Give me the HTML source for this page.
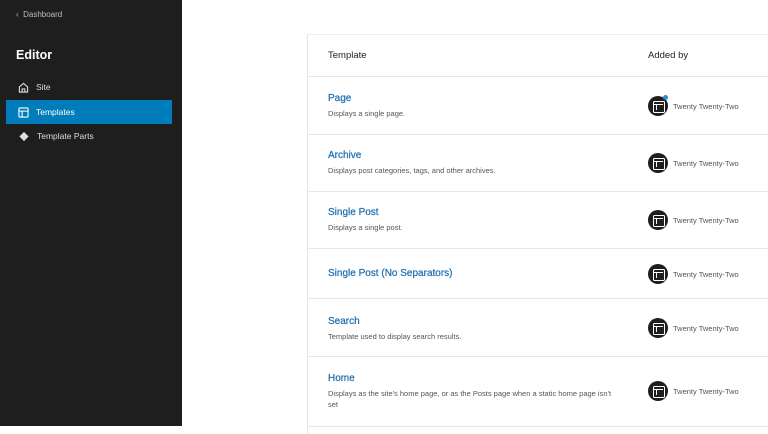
<!DOCTYPE html><html><head><style>
*{margin:0;padding:0;box-sizing:border-box}
body{width:768px;height:426px;overflow:hidden;background:#fff;font-family:"Liberation Sans",sans-serif;position:relative}
.sb{position:absolute;left:0;top:0;width:182px;height:426px;background:#1e1e1e;color:#ccc}
.dash{position:absolute;left:16px;top:10px;font-size:8px;color:#bbb}
.ed{position:absolute;left:16px;top:48px;font-size:12.5px;font-weight:bold;color:#fff}
.it{position:absolute;left:6px;width:166px;height:24px;font-size:8.5px;color:#ddd;display:flex;align-items:center;padding-left:12px}
.it svg{margin-right:7px}
.sel{background:#007cba;color:#fff}
.card{position:absolute;left:307px;top:34px;width:470px;height:400px;background:#fff;border-left:1px solid #e6e6e6;border-top:1px solid #eee}
.row{position:absolute;left:0;width:470px;border-bottom:1px solid #e8e8e8}
.t{position:absolute;left:20px;font-size:10px;color:#2271b1;-webkit-text-stroke:0.25px #2271b1}
.d{position:absolute;left:20px;font-size:7.5px;color:#555;line-height:11px;width:295px}
.av{position:absolute;left:340px;width:20px;height:20px;border-radius:50%;background:#1e1e1e}
.av:after{content:"";position:absolute;left:5px;top:5px;width:10px;height:10px;border:1.3px solid #fff;border-radius:1.5px}
.av i{position:absolute;left:5px;top:8px;width:10px;height:1.3px;background:#fff}
.av b{position:absolute;left:8px;top:8px;width:1.3px;height:6px;background:#fff}
.an{position:absolute;left:365px;font-size:7.5px;color:#555}
.h{font-size:9.5px;color:#1e1e1e;position:absolute;top:15px}
</style></head><body>
<div class="sb">
<div class="dash">‹&nbsp; Dashboard</div>
<div class="ed">Editor</div>
<div class="it" style="top:75px"><svg width="11" height="11" viewBox="0 0 12 12"><path d="M1.5 5.5L6 1.5l4.5 4V11h-9z M4.5 11V7.5h3V11" fill="none" stroke="#ddd" stroke-width="1.2"/></svg>Site</div>
<div class="it sel" style="top:100px"><svg width="11" height="11" viewBox="0 0 12 12"><rect x="1" y="1" width="10" height="10" rx="1" fill="none" stroke="#fff" stroke-width="1.2"/><path d="M1 4.5h10M4.5 4.5V11" stroke="#fff" stroke-width="1.2"/></svg>Templates</div>
<div class="it" style="top:124px"><svg width="12" height="11" viewBox="0 0 12 12"><path d="M6 1l5 5-5 5-5-5z" fill="#ddd"/></svg>Template Parts</div>
</div>
<div class="card">
<div class="row" style="top:0;height:42px"><span class="h" style="left:20px">Template</span><span class="h" style="left:340px">Added by</span></div>
<div class="row" style="top:42px;height:58px"><div class="t" style="top:16px">Page</div><div class="d" style="top:31px">Displays a single page.</div><div class="av" style="top:19px"><i></i><b></b></div><div style="position:absolute;left:355px;top:18px;width:5px;height:5px;border-radius:50%;background:#2c8fd6"></div><div class="an" style="top:25px">Twenty Twenty-Two</div></div>
<div class="row" style="top:100px;height:57px"><div class="t" style="top:15px">Archive</div><div class="d" style="top:30px">Displays post categories, tags, and other archives.</div><div class="av" style="top:18px"><i></i><b></b></div><div class="an" style="top:24px">Twenty Twenty-Two</div></div>
<div class="row" style="top:157px;height:57px"><div class="t" style="top:15px">Single Post</div><div class="d" style="top:30px">Displays a single post.</div><div class="av" style="top:18px"><i></i><b></b></div><div class="an" style="top:24px">Twenty Twenty-Two</div></div>
<div class="row" style="top:214px;height:50px"><div class="t" style="top:19px">Single Post (No Separators)</div><div class="av" style="top:15px"><i></i><b></b></div><div class="an" style="top:21px">Twenty Twenty-Two</div></div>
<div class="row" style="top:264px;height:58px"><div class="t" style="top:17px">Search</div><div class="d" style="top:32px">Template used to display search results.</div><div class="av" style="top:19px"><i></i><b></b></div><div class="an" style="top:25px">Twenty Twenty-Two</div></div>
<div class="row" style="top:322px;height:70px"><div class="t" style="top:16px">Home</div><div class="d" style="top:31px">Displays as the site's home page, or as the Posts page when a static home page isn't set</div><div class="av" style="top:24px"><i></i><b></b></div><div class="an" style="top:30px">Twenty Twenty-Two</div></div>
</div>
</body></html>
